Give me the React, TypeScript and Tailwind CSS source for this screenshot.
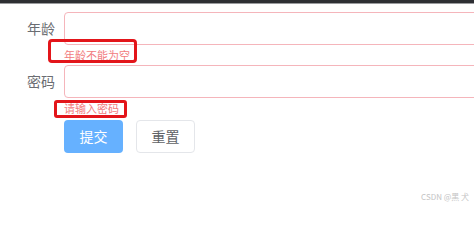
import React from "react";

const font = { fontFamily: '"Noto Sans CJK SC", "Liberation Sans", sans-serif' };

function Field({ label, error }: { label: string; error: string }) {
  return (
    <div>
      <div className="flex items-center h-[33px]">
        <label className="w-[64px] shrink-0 pr-[9px] text-right text-[14px] text-[#6b6d72]">
          {label}
        </label>
        <input className="w-[440px] shrink-0 h-[33px] rounded-[4px] border border-[#f5b5bb] bg-white outline-none" />
      </div>
      <div className="pl-[64px] h-[20px] leading-[20px] text-[11px] text-[#f27c80]">
        {error}
      </div>
    </div>
  );
}

export default function App() {
  return (
    <div className="relative w-[474px] h-[208px] overflow-hidden bg-white" style={font}>
      {/* top strip */}
      <div className="h-[3px] bg-[#2e2f33]" />
      <div className="h-[1px] bg-[#9a9b9e]" />

      <form className="pt-[8px]">
        <Field label="年龄" error="年龄不能为空" />
        <Field label="密码" error="请输入密码" />

        <div className="flex gap-[13px] pl-[64px] pt-[2px]">
          <button
            type="button"
            className="w-[59px] h-[33px] rounded-[4px] bg-[#66b1ff] text-white text-[14px]"
          >
            提交
          </button>
          <button
            type="button"
            className="w-[59px] h-[33px] rounded-[4px] border border-[#e4e6ea] bg-white text-[#606266] text-[14px]"
          >
            重置
          </button>
        </div>
      </form>

      {/* annotation boxes */}
      <div className="absolute left-[48px] top-[39px] w-[89px] h-[24px] rounded-[4px] border-[3px] border-[#e3151a]" />
      <div className="absolute left-[54px] top-[100px] w-[73px] h-[18px] rounded-[3px] border-[3px] border-[#e3151a]" />

      {/* watermark */}
      <div className="absolute left-[421px] top-[191px] text-[8px] text-[#c4c4c4] whitespace-nowrap">
        CSDN @黑 犬
      </div>
    </div>
  );
}
